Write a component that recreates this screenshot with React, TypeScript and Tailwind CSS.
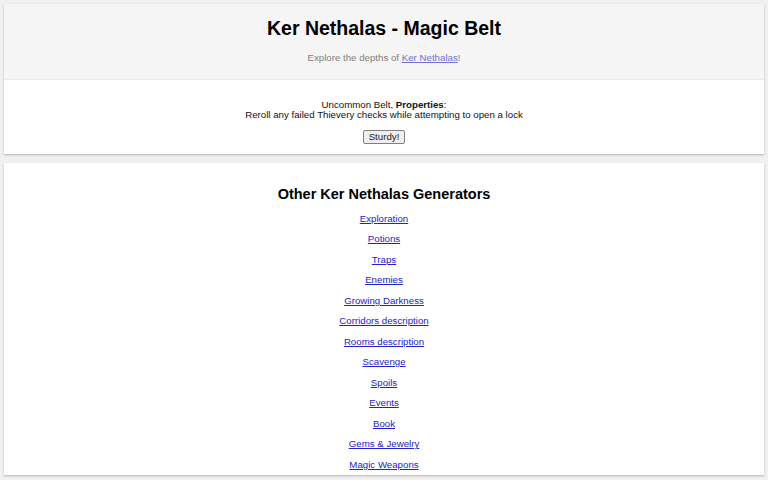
const generators = [
  'Exploration',
  'Potions',
  'Traps',
  'Enemies',
  'Growing Darkness',
  'Corridors description',
  'Rooms description',
  'Scavenge',
  'Spoils',
  'Events',
  'Book',
  'Gems & Jewelry',
  'Magic Weapons',
];

const App = () => {
  return (
    <div
      className="min-h-[480px] bg-[#f0f0f0] px-[4px] pt-[4px] text-[9.7px] text-[#111]"
      style={{ fontFamily: '"Liberation Sans", Arial, sans-serif' }}
    >
      {/* 结果卡片 */}
      <div className="bg-white shadow-[0_1px_2px_rgba(0,0,0,0.25)]">
        <div className="border-b border-[#ececec] bg-[#f5f5f5] pt-[13px] pb-[16px] text-center">
          <h1 className="text-[19.5px] font-bold leading-[22px] text-black">Ker Nethalas - Magic Belt</h1>
          <p className="mt-[13px] leading-[11px] text-[#808080]">
            Explore the depths of{' '}
            <a href="#" className="text-[#6f6fd6] underline">
              Ker Nethalas
            </a>
            !
          </p>
        </div>
        <div className="pt-[20px] pb-[9px] text-center">
          <div className="leading-[10px]">
            Uncommon Belt, <b>Properties</b>:
          </div>
          <div className="leading-[10px]">Reroll any failed Thievery checks while attempting to open a lock</div>
          <button className="mt-[10px] h-[14px] rounded-[2px] border border-[#808080] bg-[#efefef] px-[5px] text-[9.7px] font-normal leading-[12px] text-[#222]">
            Sturdy!
          </button>
        </div>
      </div>

      {/* 其他生成器 */}
      <div className="mt-[9px] bg-white pt-[23px] text-center shadow-[0_1px_2px_rgba(0,0,0,0.25)]">
        <h2 className="text-[14.5px] font-bold leading-[17px] text-black">Other Ker Nethalas Generators</h2>
        <div className="mt-[6px]">
          {generators.map((g) => (
            <div key={g} className="leading-[20.5px]">
              <a href="#" className="text-[#2222cc] underline">
                {g}
              </a>
            </div>
          ))}
        </div>
      </div>
    </div>
  );
};

export default App;
